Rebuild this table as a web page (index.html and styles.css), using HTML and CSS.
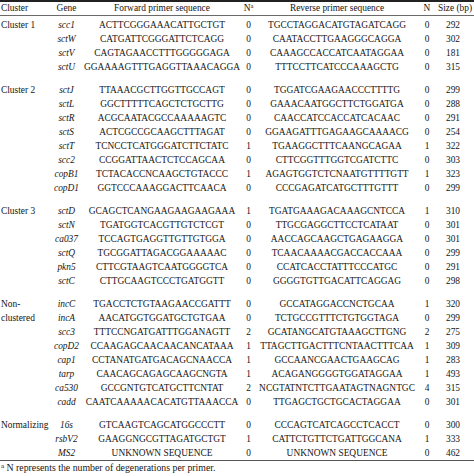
FILE: index.html
```html
<!DOCTYPE html>
<html>
<head>
<meta charset="utf-8">
<link rel="stylesheet" href="styles.css">
</head>
<body>
<table class="primers">
<colgroup>
<col class="c-cluster"><col class="c-gene"><col class="c-fwd"><col class="c-na"><col class="c-rev"><col class="c-n"><col class="c-size">
</colgroup>
<thead>
<tr><th class="cl">Cluster</th><th>Gene</th><th>Forward primer sequence</th><th>N<sup class="sa">a</sup></th><th>Reverse primer sequence</th><th>N</th><th>Size (bp)</th></tr>
</thead>
<tbody class="grp">
<tr><td class="cl">Cluster 1</td><td class="g">scc1</td><td>ACTTCGGGAAACATTGCTGT</td><td>0</td><td>TGCCTAGGACATGTAGATCAGG</td><td>0</td><td>292</td></tr>
<tr><td class="cl"></td><td class="g">sctW</td><td>CATGATTCGGGATTCTCAGG</td><td>0</td><td>CAATACCTTGAAGGGCAGGA</td><td>0</td><td>302</td></tr>
<tr><td class="cl"></td><td class="g">sctV</td><td>CAGTAGAACCTTTGGGGGAGA</td><td>0</td><td>CAAAGCCACCATCAATAGGAA</td><td>0</td><td>181</td></tr>
<tr><td class="cl"></td><td class="g">sctU</td><td>GGAAAAGTTTGAGGTTAAACAGGA</td><td>0</td><td>TTTCCTTCATCCCAAAGCTG</td><td>0</td><td>315</td></tr>
</tbody>
<tbody class="grp">
<tr><td class="cl">Cluster 2</td><td class="g">sctJ</td><td>TTAAACGCTTGGTTGCCAGT</td><td>0</td><td>TGGATCGAAGAACCCTTTTG</td><td>0</td><td>299</td></tr>
<tr><td class="cl"></td><td class="g">sctL</td><td>GGCTTTTTCAGCTCTGCTTG</td><td>0</td><td>GAAACAATGGCTTCTGGATGA</td><td>0</td><td>288</td></tr>
<tr><td class="cl"></td><td class="g">sctR</td><td>ACGCAATACGCCAAAAAGTC</td><td>0</td><td>CAACCATCCACCATCACAAC</td><td>0</td><td>291</td></tr>
<tr><td class="cl"></td><td class="g">sctS</td><td>ACTCGCCGCAAGCTTTAGAT</td><td>0</td><td>GGAAGATTTGAGAAGCAAAACG</td><td>0</td><td>254</td></tr>
<tr><td class="cl"></td><td class="g">sctT</td><td>TCNCCTCATGGGATCTTCTATC</td><td>1</td><td>TGAAGGCTTTCAANGCAGAA</td><td>1</td><td>322</td></tr>
<tr><td class="cl"></td><td class="g">scc2</td><td>CCGGATTAACTCTCCAGCAA</td><td>0</td><td>CTTCGGTTTGGTCGATCTTC</td><td>0</td><td>303</td></tr>
<tr><td class="cl"></td><td class="g">copB1</td><td>TCTACACCNCAAGCTGTACCC</td><td>1</td><td>AGAGTGGTCTCNAATGTTTTGTT</td><td>1</td><td>323</td></tr>
<tr><td class="cl"></td><td class="g">copD1</td><td>GGTCCCAAAGGACTTCAACA</td><td>0</td><td>CCCGAGATCATGCTTTGTTT</td><td>0</td><td>299</td></tr>
</tbody>
<tbody class="grp">
<tr><td class="cl">Cluster 3</td><td class="g">sctD</td><td>GCAGCTCANGAAGAAGAAGAAA</td><td>1</td><td>TGATGAAAGACAAAGCNTCCA</td><td>1</td><td>310</td></tr>
<tr><td class="cl"></td><td class="g">sctN</td><td>TGATGGTCACGTTGTCTCGT</td><td>0</td><td>TTGCGAGGCTTCCTCATAAT</td><td>0</td><td>301</td></tr>
<tr><td class="cl"></td><td class="g">ca037</td><td>TCCAGTGAGGTTGTTGTGGA</td><td>0</td><td>AACCAGCAAGCTGAGAAGGA</td><td>0</td><td>301</td></tr>
<tr><td class="cl"></td><td class="g">sctQ</td><td>TGCGGATTAGACGGAAAAAC</td><td>0</td><td>TCAACAAAACGACCACCAAA</td><td>0</td><td>299</td></tr>
<tr><td class="cl"></td><td class="g">pkn5</td><td>CTTCGTAAGTCAATGGGGTCA</td><td>0</td><td>CCATCACCTATTTCCCATGC</td><td>0</td><td>291</td></tr>
<tr><td class="cl"></td><td class="g">sctC</td><td>CTTGCAAGTCCCTGATGGTT</td><td>0</td><td>GGGGTGTTGACATTCAGGAG</td><td>0</td><td>298</td></tr>
</tbody>
<tbody class="grp">
<tr><td class="cl">Non-</td><td class="g">incC</td><td>TGACCTCTGTAAGAACCGATTT</td><td>0</td><td>GCCATAGGACCNCTGCAA</td><td>1</td><td>320</td></tr>
<tr><td class="cl">clustered</td><td class="g">incA</td><td>AACATGGTGGATGCTGTGAA</td><td>0</td><td>TCTGCCGTTTCTGTGGTAGA</td><td>0</td><td>299</td></tr>
<tr><td class="cl"></td><td class="g">scc3</td><td>TTTCCNGATGATTTGGANAGTT</td><td>2</td><td>GCATANGCATGTAAAGCTTGNG</td><td>2</td><td>275</td></tr>
<tr><td class="cl"></td><td class="g">copD2</td><td>CCAAGAGCAACAACANCATAAA</td><td>1</td><td>TTAGCTTGACTTTCNTAACTTTCAA</td><td>1</td><td>309</td></tr>
<tr><td class="cl"></td><td class="g">cap1</td><td>CCTANATGATGACAGCNAACCA</td><td>1</td><td>GCCAANCGAACTGAAGCAG</td><td>1</td><td>283</td></tr>
<tr><td class="cl"></td><td class="g">tarp</td><td>CAACAGCAGAGCAAGCNGTA</td><td>1</td><td>ACAGANGGGGTGGATAGGAA</td><td>1</td><td>493</td></tr>
<tr><td class="cl"></td><td class="g">ca530</td><td>GCCGNTGTCATGCTTCNTAT</td><td>2</td><td>NCGTATNTCTTGAATAGTNAGNTGC</td><td>4</td><td>315</td></tr>
<tr><td class="cl"></td><td class="g">cadd</td><td>CAATCAAAAACACATGTTAAACCA</td><td>0</td><td>TTGAGCTGCTGCACTAGGAA</td><td>0</td><td>301</td></tr>
</tbody>
<tbody class="grp last">
<tr><td class="cl">Normalizing</td><td class="g">16s</td><td>GTCAAGTCAGCATGGCCCTT</td><td>0</td><td>CCCAGTCATCAGCCTCACCT</td><td>0</td><td>300</td></tr>
<tr><td class="cl"></td><td class="g">rsbV2</td><td>GAAGGNGCGTTAGATGCTGT</td><td>1</td><td>CATTCTGTTCTGATTGGCANA</td><td>1</td><td>333</td></tr>
<tr><td class="cl"></td><td class="g">MS2</td><td>UNKNOWN SEQUENCE</td><td>0</td><td>UNKNOWN SEQUENCE</td><td>0</td><td>462</td></tr>
</tbody>
</table>
<p class="note"><sup class="na">a</sup> N represents the number of degenerations per primer.</p>
</body>
</html>
```
FILE: styles.css
```css
html, body {
  margin: 0;
  padding: 0;
  background: #fff;
}
body {
  width: 474px;
  font-family: "Liberation Serif", "Times New Roman", serif;
  font-size: 9.4px;
  color: #151515;
}
.primers {
  width: 474px;
  border-collapse: collapse;
  table-layout: fixed;
}
.c-cluster { width: 49px; }
.c-gene { width: 35px; }
.c-fwd { width: 156px; }
.c-na { width: 17px; }
.c-rev { width: 160px; }
.c-n { width: 20px; }
.c-size { width: 37px; }

.primers th,
.primers td {
  padding: 0;
  text-align: center;
  white-space: nowrap;
  line-height: 14px;
  height: 14px;
  font-weight: normal;
  overflow: visible;
}
.primers thead tr {
  border-top: 2px solid #222;
  border-bottom: 1px solid #6a6a6a;
}
.primers th {
  line-height: 13px;
  height: 13px;
}
.primers th:last-child,
.primers td:last-child {
  padding-right: 6px;
  padding-left: 1px;
}
.primers .cl {
  text-align: left;
  padding-left: 1px;
}
.primers .g {
  font-style: italic;
}
.grp:first-of-type tr:first-child td {
  padding-top: 2px;
}
.grp + .grp tr:first-child td {
  padding-top: 9px;
}
.grp.last {
  border-bottom: 1px solid #555;
}
.sa {
  font-size: 6.5px;
  line-height: 0;
  vertical-align: 3px;
}
.note {
  margin: 0;
  padding-left: 1px;
  line-height: 13px;
  font-size: 9.8px;
}
.na {
  font-size: 7px;
  line-height: 0;
  vertical-align: 3px;
}
```
